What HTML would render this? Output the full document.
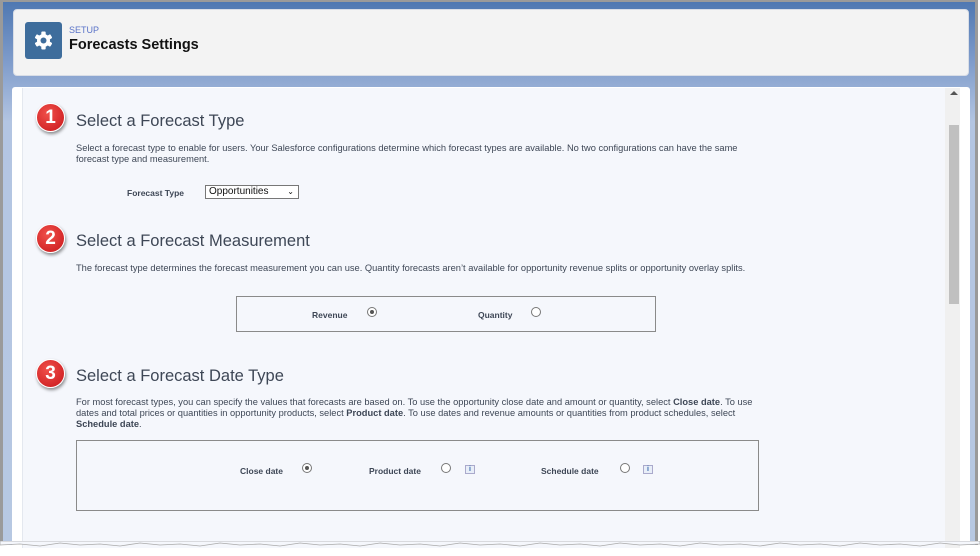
<!DOCTYPE html>
<html><head><meta charset="utf-8"><style>
*{margin:0;padding:0;box-sizing:border-box}
body{width:980px;height:556px;background:#fff;font-family:"Liberation Sans",sans-serif;position:relative;overflow:hidden}
.frame{position:absolute;left:0;top:0;width:978px;height:545px;border-left:3px solid #9a9a9a;border-top:2px solid #9a9a9a;border-right:3px solid #9a9a9a;background:linear-gradient(#4f78b2 0,#7f9ccb 60px,#b3c5e2 120px,#b7c8e2 100%)}
.hdr{position:absolute;left:13px;top:9px;width:956px;height:67px;background:#f3f3f3;border-radius:4px;border:1px solid #d8dde6}
.icon{position:absolute;left:25px;top:22px;width:37px;height:37px;background:#3e6d9c;border-radius:3px}
.setup{position:absolute;left:69px;top:25px;font-size:9px;color:#5a73c8}
.title{position:absolute;left:69px;top:37px;font-size:14.5px;font-weight:bold;color:#111}
.panel{position:absolute;left:12px;top:87px;width:958px;height:460px;background:#fff;border-radius:3px}
.inner{position:absolute;left:22px;top:88px;width:923px;height:460px;background:#f5f7fc;border-left:1px solid #e4e8ef}
.sb{position:absolute;left:945px;top:88px;width:15px;height:460px;background:#f0f0f0}
.thumb{position:absolute;left:949px;top:125px;width:10px;height:179px;background:#c0c0c0}
.arr{position:absolute;left:950px;top:91px;width:0;height:0;border-left:4px solid transparent;border-right:4px solid transparent;border-bottom:4px solid #555}
.badge{position:absolute;width:29px;height:29px;border-radius:50%;background:radial-gradient(circle at 40% 35%,#f0504a,#c8161b);box-shadow:1px 2px 3px rgba(0,0,0,.45);color:#fff;font-weight:bold;font-size:19px;text-align:center;line-height:27px;border:1.5px solid #fff}
.h{position:absolute;left:76px;font-size:16.5px;color:#3e4756}
.p{position:absolute;left:76px;font-size:9.3px;color:#3e4756;line-height:11px;width:690px}
.lbl{position:absolute;font-size:8.5px;font-weight:bold;color:#3e4756}
.box{position:absolute;border:1.5px solid #8a8a8a}
.radio{position:absolute;width:10px;height:10px;border-radius:50%;border:1px solid #777;background:#fff}
.radio.on::after{content:"";position:absolute;left:2px;top:2px;width:4px;height:4px;border-radius:50%;background:#555}
.info{position:absolute;width:10px;height:9px;border:1px solid #aac;background:#e8eef8;font-size:7px;color:#3366aa;text-align:center;line-height:8px;font-weight:bold}
.sel{position:absolute;left:205px;top:185px;width:94px;height:14px;border:1px solid #777;background:#fff;font-size:10px;color:#111;padding-left:3px;line-height:12px}
.torn{position:absolute;left:0;top:541px;width:980px;height:15px}
</style></head><body>
<div class="frame"></div>
<div class="hdr"></div>
<div class="icon"><svg width="37" height="37" viewBox="0 0 37 37"><g transform="translate(18.5 18.5)" fill="#fff"><g id="t"><rect x="-2.2" y="-9" width="4.4" height="18" rx="1"/></g><use href="#t" transform="rotate(60)"/><use href="#t" transform="rotate(120)"/><circle r="6.5"/></g><circle cx="18.5" cy="18.5" r="3" fill="#3e6d9c"/></svg></div>
<div class="setup">SETUP</div>
<div class="title">Forecasts Settings</div>
<div class="panel"></div>
<div class="inner"></div>
<div class="sb"></div><div class="thumb"></div><div class="arr"></div>

<div class="badge" style="left:36px;top:103px">1</div>
<div class="h" style="top:112px">Select a Forecast Type</div>
<div class="p" style="top:143px">Select a forecast type to enable for users. Your Salesforce configurations determine which forecast types are available. No two configurations can have the same forecast type and measurement.</div>
<div class="lbl" style="left:127px;top:188px">Forecast Type</div>
<div class="sel">Opportunities<span style="position:absolute;right:4px;top:0;font-size:8px">&#8964;</span></div>

<div class="badge" style="left:36px;top:224px">2</div>
<div class="h" style="top:232px">Select a Forecast Measurement</div>
<div class="p" style="top:263px;width:720px">The forecast type determines the forecast measurement you can use. Quantity forecasts aren’t available for opportunity revenue splits or opportunity overlay splits.</div>
<div class="box" style="left:236px;top:296px;width:420px;height:36px"></div>
<div class="lbl" style="left:312px;top:310px">Revenue</div>
<div class="radio on" style="left:367px;top:307px"></div>
<div class="lbl" style="left:478px;top:310px">Quantity</div>
<div class="radio" style="left:531px;top:307px"></div>

<div class="badge" style="left:36px;top:359px">3</div>
<div class="h" style="top:367px">Select a Forecast Date Type</div>
<div class="p" style="top:397px;width:690px">For most forecast types, you can specify the values that forecasts are based on. To use the opportunity close date and amount or quantity, select <b>Close date</b>. To use dates and total prices or quantities in opportunity products, select <b>Product date</b>. To use dates and revenue amounts or quantities from product schedules, select <b>Schedule date</b>.</div>
<div class="box" style="left:76px;top:440px;width:683px;height:71px"></div>
<div class="lbl" style="left:240px;top:466px">Close date</div>
<div class="radio on" style="left:302px;top:463px"></div>
<div class="lbl" style="left:369px;top:466px">Product date</div>
<div class="radio" style="left:441px;top:463px"></div>
<div class="info" style="left:465px;top:465px">i</div>
<div class="lbl" style="left:541px;top:466px">Schedule date</div>
<div class="radio" style="left:620px;top:463px"></div>
<div class="info" style="left:643px;top:465px">i</div>

<svg class="torn" viewBox="0 0 980 15" preserveAspectRatio="none"><path d="M0 0 H980 V3 L960 4 L940 2 L920 5 L900 3 L880 4 L860 2 L840 5 L820 3 L800 4 L780 2 L760 5 L740 3 L720 4 L700 2 L680 5 L660 3 L640 4 L620 2 L600 5 L580 3 L560 4 L540 2 L520 5 L500 3 L480 4 L460 2 L440 5 L420 3 L400 4 L380 2 L360 5 L340 3 L320 4 L300 2 L280 5 L260 3 L240 4 L220 2 L200 5 L180 3 L160 4 L140 2 L120 5 L100 3 L80 4 L60 2 L40 5 L20 3 L0 4 Z" fill="#f5f7fc" stroke="#aaa" stroke-width="0.8"/></svg>
</body></html>
